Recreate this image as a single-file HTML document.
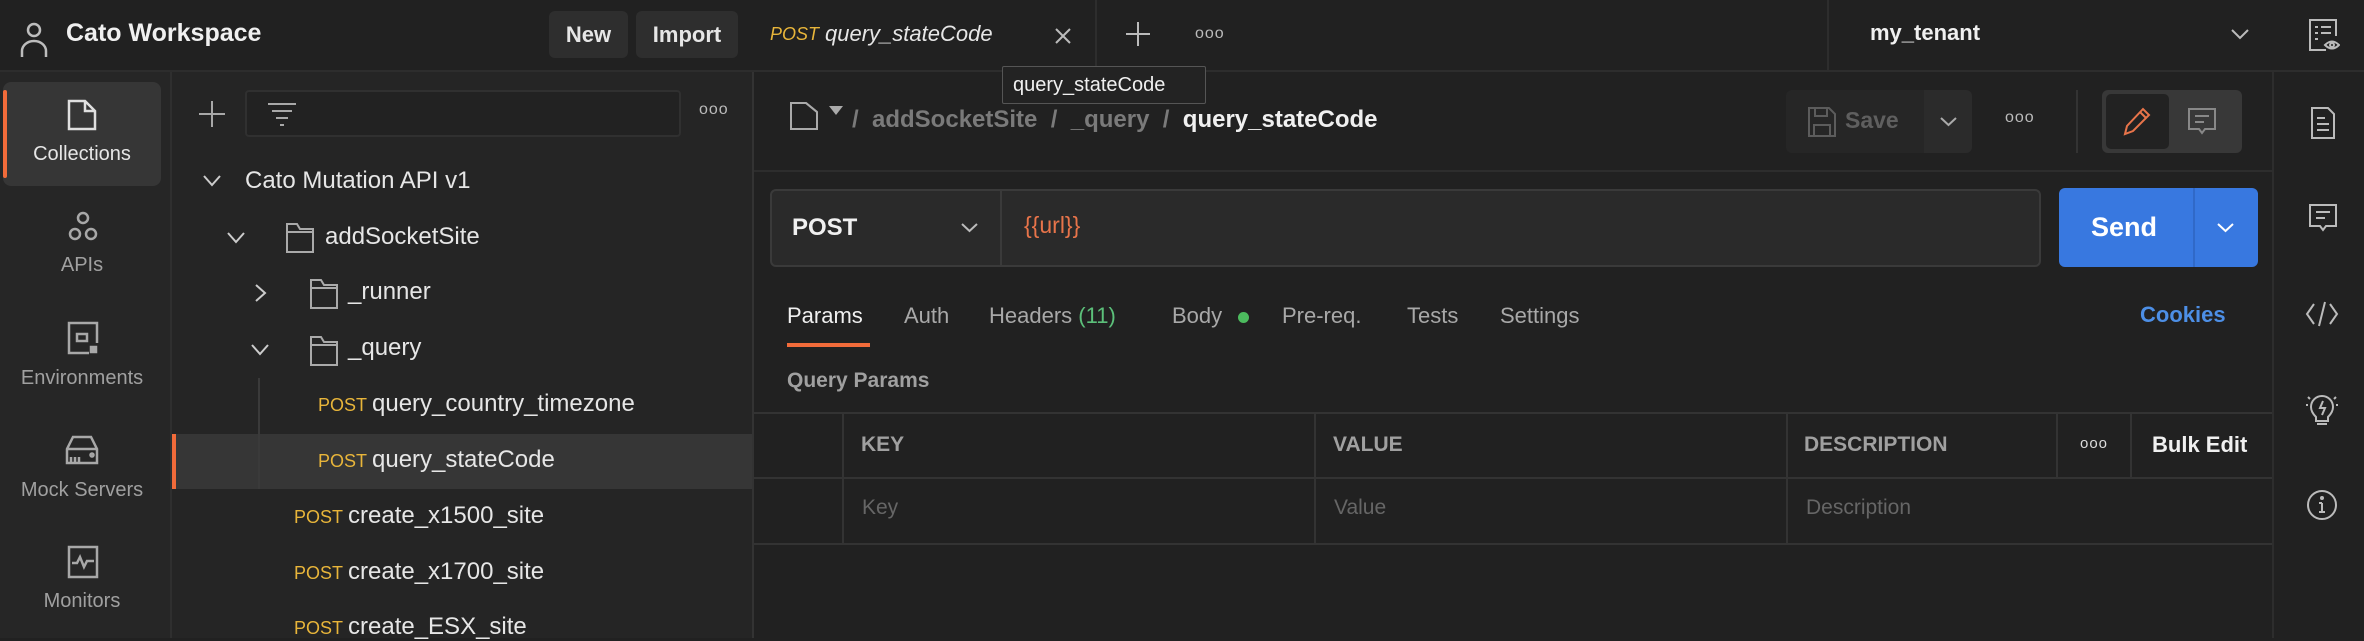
<!DOCTYPE html>
<html><head><meta charset="utf-8"><style>
*{margin:0;padding:0;box-sizing:border-box}
body{width:2364px;height:638px;background:#212121;font-family:"Liberation Sans",sans-serif;color:#e6e6e6;position:relative;overflow:hidden}
.a{position:absolute;white-space:nowrap}
.ic{position:absolute;fill:none;stroke:#bdbdbd;stroke-width:2.5}
.hl{position:absolute;height:2px;background:#333}
.vl{position:absolute;width:2px;background:#333}
.post{color:#e8b53a;font-size:18px}
.row{font-size:24px;color:#e6e6e6}
</style></head><body>
<div class="a" style="left:0;top:0;width:2364px;height:71px;background:#212121"></div>
<div class="hl" style="left:0;top:70px;width:2364px;background:#2d2d2d"></div>
<svg class="ic" style="left:18px;top:20px" width="32" height="40" viewBox="0 0 32 40"><circle cx="16" cy="10" r="6"/><path d="M4 37v-6a12 10 0 0 1 24 0v6"/></svg>
<div class="a" style="left:66px;top:19px;font-size:25px;font-weight:bold;color:#f0f0f0">Cato Workspace</div>
<div class="a" style="left:549px;top:11px;width:79px;height:47px;background:#2e2e2e;border-radius:6px;font-size:22px;font-weight:bold;text-align:center;line-height:47px">New</div>
<div class="a" style="left:636px;top:11px;width:102px;height:47px;background:#2e2e2e;border-radius:6px;font-size:22px;font-weight:bold;text-align:center;line-height:47px">Import</div>
<div class="a" style="left:0;top:72px;width:170px;height:566px;background:#262626"></div>
<div class="vl" style="left:170px;top:72px;height:566px;background:#2f2f2f"></div>
<div class="a" style="left:3px;top:82px;width:158px;height:104px;background:#363636;border-radius:8px"></div>
<div class="a" style="left:3px;top:90px;width:4px;height:88px;background:#f26b3a;border-radius:2px"></div>
<svg class="ic" style="left:67px;top:99px;stroke:#e0e0e0" width="30" height="32" viewBox="0 0 30 32"><path d="M2 2h16l10 10v18H2z M18 2v10h10"/></svg>
<div class="a" style="left:0;top:143px;width:164px;text-align:center;font-size:20px;color:#e6e6e6" >Collections</div>
<svg class="ic" style="left:67px;top:210px;stroke:#a8a8a8" width="32" height="34" viewBox="0 0 32 34"><circle cx="16" cy="8" r="5"/><circle cx="8" cy="24" r="5"/><circle cx="24" cy="24" r="5"/></svg>
<div class="a" style="left:0;top:254px;width:164px;text-align:center;font-size:20px;color:#a0a0a0">APIs</div>
<svg class="ic" style="left:67px;top:321px;stroke:#a8a8a8" width="32" height="34" viewBox="0 0 32 34"><path d="M30 22V2H2v30h20"/><rect x="10" y="13" width="10" height="7"/><rect x="24" y="26" width="5" height="5" fill="#a8a8a8"/></svg>
<div class="a" style="left:0;top:367px;width:164px;text-align:center;font-size:20px;color:#a0a0a0">Environments</div>
<svg class="ic" style="left:65px;top:435px;stroke:#a8a8a8" width="34" height="32" viewBox="0 0 34 32"><path d="M2 14l6-12h18l6 12v14H2z M2 14h30 M6 28v-6 M10 28v-6 M14 28v-6"/><circle cx="27" cy="20" r="1.5"/></svg>
<div class="a" style="left:0;top:479px;width:164px;text-align:center;font-size:20px;color:#a0a0a0">Mock Servers</div>
<svg class="ic" style="left:67px;top:545px;stroke:#a8a8a8" width="32" height="34" viewBox="0 0 32 34"><rect x="2" y="2" width="28" height="30"/><path d="M5 18h5l3-6 4 10 3-6h7"/></svg>
<div class="a" style="left:0;top:590px;width:164px;text-align:center;font-size:20px;color:#a0a0a0">Monitors</div>
<div class="a" style="left:172px;top:72px;width:580px;height:566px;background:#252525"></div>
<div class="vl" style="left:752px;top:72px;height:566px;background:#333"></div>
<svg class="ic" style="left:199px;top:101px;stroke:#a8a8a8;stroke-width:2" width="26" height="26" viewBox="0 0 26 26"><path d="M13 0v26M0 13h26"/></svg>
<div class="a" style="left:245px;top:90px;width:436px;height:47px;border:2px solid #303030;border-radius:4px;background:#222"></div>
<svg class="ic" style="left:267px;top:102px;stroke:#a8a8a8;stroke-width:2" width="30" height="24" viewBox="0 0 30 24"><path d="M1 2h28M5 9h20M9 16h12M13 23h4"/></svg>
<div class="a" style="left:699px;top:101px;font-size:16px;color:#bbb;letter-spacing:1px">ooo</div>
<svg class="ic" style="left:203px;top:175px;stroke:#ccc;stroke-width:2" width="18" height="12" viewBox="0 0 18 12"><path d="M1 1l8 9 8-9"/></svg>
<div class="a row" style="left:245px;top:167px">Cato Mutation API v1</div>
<svg class="ic" style="left:227px;top:232px;stroke:#ccc;stroke-width:2" width="18" height="12" viewBox="0 0 18 12"><path d="M1 1l8 9 8-9"/></svg>
<svg class="ic" style="left:286px;top:223px;stroke:#aaa;stroke-width:2" width="28" height="30" viewBox="0 0 28 30"><path d="M1 1h10l3 5h13v23H1z M1 9h26"/></svg>
<div class="a row" style="left:325px;top:223px">addSocketSite</div>
<svg class="ic" style="left:255px;top:284px;stroke:#ccc;stroke-width:2" width="12" height="18" viewBox="0 0 12 18"><path d="M1 1l9 8-9 8"/></svg>
<svg class="ic" style="left:310px;top:279px;stroke:#aaa;stroke-width:2" width="28" height="30" viewBox="0 0 28 30"><path d="M1 1h10l3 5h13v23H1z M1 9h26"/></svg>
<div class="a row" style="left:348px;top:278px">_runner</div>
<svg class="ic" style="left:251px;top:344px;stroke:#ccc;stroke-width:2" width="18" height="12" viewBox="0 0 18 12"><path d="M1 1l8 9 8-9"/></svg>
<svg class="ic" style="left:310px;top:336px;stroke:#aaa;stroke-width:2" width="28" height="30" viewBox="0 0 28 30"><path d="M1 1h10l3 5h13v23H1z M1 9h26"/></svg>
<div class="a row" style="left:348px;top:334px">_query</div>
<div class="a" style="left:172px;top:434px;width:580px;height:55px;background:#363636"></div>
<div class="a" style="left:172px;top:434px;width:4px;height:55px;background:#f26b3a"></div>
<div class="vl" style="left:258px;top:378px;height:111px;background:#3a3a3a"></div>
<div class="a post" style="left:318px;top:395px">POST</div>
<div class="a row" style="left:372px;top:390px">query_country_timezone</div>
<div class="a post" style="left:318px;top:451px">POST</div>
<div class="a row" style="left:372px;top:446px">query_stateCode</div>
<div class="a post" style="left:294px;top:507px">POST</div>
<div class="a row" style="left:348px;top:502px">create_x1500_site</div>
<div class="a post" style="left:294px;top:563px">POST</div>
<div class="a row" style="left:348px;top:558px">create_x1700_site</div>
<div class="a post" style="left:294px;top:618px">POST</div>
<div class="a row" style="left:348px;top:613px">create_ESX_site</div>
<div class="a" style="left:770px;top:24px;font-size:18px;font-style:italic;color:#e8b53a">POST</div>
<div class="a" style="left:825px;top:21px;font-size:22px;font-style:italic;color:#e6e6e6">query_stateCode</div>
<svg class="ic" style="left:1055px;top:28px;stroke:#bbb;stroke-width:2" width="16" height="16" viewBox="0 0 16 16"><path d="M1 1l14 14M15 1L1 15"/></svg>
<div class="vl" style="left:1095px;top:0;height:70px;background:#2d2d2d"></div>
<svg class="ic" style="left:1126px;top:22px;stroke:#bbb;stroke-width:2" width="24" height="24" viewBox="0 0 24 24"><path d="M12 0v24M0 12h24"/></svg>
<div class="a" style="left:1195px;top:25px;font-size:16px;color:#bbb;letter-spacing:1px">ooo</div>
<div class="vl" style="left:1827px;top:0;height:70px;background:#2d2d2d"></div>
<div class="a" style="left:1870px;top:20px;font-size:22px;font-weight:bold;color:#f0f0f0">my_tenant</div>
<svg class="ic" style="left:2231px;top:29px;stroke:#bbb;stroke-width:2" width="18" height="11" viewBox="0 0 18 11"><path d="M1 1l8 8 8-8"/></svg>
<svg class="ic" style="left:2308px;top:18px;stroke:#bbb;stroke-width:2" width="32" height="34" viewBox="0 0 32 34"><path d="M18 32H2V2h26v16 M7 9h3M13 9h10M7 15h3M13 15h10M7 21h3"/><path d="M17 27q7-7 14 0q-7 7-14 0z"/><circle cx="24" cy="27" r="2"/></svg>
<div class="vl" style="left:2272px;top:72px;height:566px;background:#2d2d2d"></div>
<svg class="ic" style="left:2310px;top:106px;stroke:#bbb;stroke-width:2" width="26" height="34" viewBox="0 0 26 34"><path d="M2 2h16l6 6v24H2z M7 12h8M7 18h12M7 24h12"/></svg>
<svg class="ic" style="left:2308px;top:203px;stroke:#bbb;stroke-width:2" width="30" height="30" viewBox="0 0 30 30"><path d="M2 2h26v21H18l-3 4-3-4H2z M8 9h14M8 15h9"/></svg>
<svg class="ic" style="left:2305px;top:301px;stroke:#bbb;stroke-width:2" width="34" height="26" viewBox="0 0 34 26"><path d="M9 3L2 13l7 10M25 3l7 10-7 10M20 1L14 25"/></svg>
<svg class="ic" style="left:2304px;top:393px;stroke:#bbb;stroke-width:2" width="36" height="34" viewBox="0 0 36 34"><path d="M12 24q-5-5-5-10a11 11 0 0 1 22 0q0 5-5 10v4H12z M13 31h10 M19 8l-3 7h5l-3 7 M2 12h2M32 12h2M4 4l2 2M32 4l-2 2"/></svg>
<svg class="ic" style="left:2306px;top:489px;stroke:#bbb;stroke-width:2" width="32" height="32" viewBox="0 0 32 32"><circle cx="16" cy="16" r="14"/><path d="M16 14v9M13 23h6M13 14h3"/><circle cx="16" cy="9" r="1" fill="#bbb"/></svg>
<svg class="ic" style="left:790px;top:102px;stroke:#aaa;stroke-width:2" width="29" height="28" viewBox="0 0 29 28"><path d="M1 1h15l11 9v17H1z"/><path d="M16 1l11 9"/></svg>
<div class="a" style="left:829px;top:106px;width:0;height:0;border-left:7px solid transparent;border-right:7px solid transparent;border-top:9px solid #aaa"></div>
<div class="a" style="left:852px;top:106px;font-size:24px;color:#7a7a7a;font-weight:bold">/&nbsp; addSocketSite &nbsp;/&nbsp; _query &nbsp;/&nbsp; <span style="color:#f0f0f0">query_stateCode</span></div>
<div class="a" style="left:1002px;top:66px;width:204px;height:38px;background:#232323;border:1px solid #555;border-radius:2px;font-size:20px;color:#f0f0f0;line-height:36px;padding-left:10px">query_stateCode</div>
<div class="a" style="left:1786px;top:90px;width:186px;height:63px;background:#262626;border-radius:6px"></div>
<div class="a" style="left:1924px;top:90px;width:48px;height:63px;background:#2b2b2b;border-radius:0 6px 6px 0"></div>
<svg class="ic" style="left:1808px;top:107px;stroke:#5c5c5c;stroke-width:2" width="28" height="30" viewBox="0 0 28 30"><path d="M1 1h20l6 6v22H1z M7 1v8h12V1 M6 29V18h16v11"/></svg>
<div class="a" style="left:1845px;top:107px;font-size:23px;color:#5f5f5f;font-weight:bold">Save</div>
<svg class="ic" style="left:1940px;top:117px;stroke:#aaa;stroke-width:2" width="17" height="10" viewBox="0 0 17 10"><path d="M1 1l7.5 7 7.5-7"/></svg>
<div class="a" style="left:2005px;top:109px;font-size:16px;color:#bbb;letter-spacing:1px">ooo</div>
<div class="vl" style="left:2076px;top:90px;height:63px;background:#333"></div>
<div class="a" style="left:2102px;top:90px;width:140px;height:63px;background:#383838;border-radius:6px"></div>
<div class="a" style="left:2106px;top:94px;width:63px;height:55px;background:#222;border-radius:5px"></div>
<svg class="ic" style="left:2123px;top:106px;stroke:#e8744a;stroke-width:2" width="30" height="30" viewBox="0 0 30 30"><path d="M2 28l2-8L20 3l6 6-16 16z M17 6l6 6"/></svg>
<svg class="ic" style="left:2188px;top:108px;stroke:#888;stroke-width:2" width="28" height="28" viewBox="0 0 28 28"><path d="M1 1h26v20H17l-3 4-3-4H1z M7 8h14M7 14h9"/></svg>
<div class="hl" style="left:754px;top:170px;width:1518px;background:#2d2d2d"></div>
<div class="a" style="left:770px;top:189px;width:1271px;height:78px;background:#2a2a2a;border:2px solid #3a3a3a;border-radius:6px"></div>
<div class="vl" style="left:1000px;top:190px;height:76px;background:#3a3a3a"></div>
<div class="a" style="left:792px;top:214px;font-size:24px;font-weight:bold;color:#f0f0f0">POST</div>
<svg class="ic" style="left:961px;top:223px;stroke:#bbb;stroke-width:2" width="17" height="10" viewBox="0 0 17 10"><path d="M1 1l7.5 7 7.5-7"/></svg>
<div class="a" style="left:1024px;top:212px;font-size:23px;color:#e8744a">{{url}}</div>
<div class="a" style="left:2059px;top:188px;width:199px;height:79px;background:#3878e0;border-radius:6px"></div>
<div class="vl" style="left:2193px;top:188px;height:79px;background:#3069c8"></div>
<div class="a" style="left:2091px;top:212px;font-size:27px;font-weight:bold;color:#fff">Send</div>
<svg class="ic" style="left:2217px;top:223px;stroke:#fff;stroke-width:2" width="17" height="10" viewBox="0 0 17 10"><path d="M1 1l7.5 7 7.5-7"/></svg>
<div class="a" style="left:787px;top:303px;font-size:22px;color:#f0f0f0">Params</div>
<div class="a" style="left:787px;top:343px;width:83px;height:4px;background:#f26b3a"></div>
<div class="a" style="left:904px;top:303px;font-size:22px;color:#a8a8a8">Auth</div>
<div class="a" style="left:989px;top:303px;font-size:22px;color:#a8a8a8">Headers <span style="color:#5cc07a">(11)</span></div>
<div class="a" style="left:1172px;top:303px;font-size:22px;color:#a8a8a8">Body</div>
<div class="a" style="left:1238px;top:312px;width:11px;height:11px;border-radius:50%;background:#4cbb5e"></div>
<div class="a" style="left:1282px;top:303px;font-size:22px;color:#a8a8a8">Pre-req.</div>
<div class="a" style="left:1407px;top:303px;font-size:22px;color:#a8a8a8">Tests</div>
<div class="a" style="left:1500px;top:303px;font-size:22px;color:#a8a8a8">Settings</div>
<div class="a" style="left:2140px;top:302px;font-size:22px;font-weight:bold;color:#4d8fe6">Cookies</div>
<div class="a" style="left:787px;top:369px;font-size:21px;font-weight:bold;color:#a0a0a0">Query Params</div>
<div class="hl" style="left:754px;top:412px;width:1518px"></div>
<div class="hl" style="left:754px;top:477px;width:1518px"></div>
<div class="hl" style="left:754px;top:543px;width:1518px"></div>
<div class="vl" style="left:842px;top:413px;height:131px"></div>
<div class="vl" style="left:1314px;top:413px;height:131px"></div>
<div class="vl" style="left:1786px;top:413px;height:131px"></div>
<div class="vl" style="left:2056px;top:413px;height:65px"></div>
<div class="vl" style="left:2130px;top:413px;height:65px"></div>
<div class="a" style="left:861px;top:433px;font-size:21px;font-weight:bold;color:#a0a0a0">KEY</div>
<div class="a" style="left:1333px;top:433px;font-size:21px;font-weight:bold;color:#a0a0a0">VALUE</div>
<div class="a" style="left:1804px;top:433px;font-size:21px;font-weight:bold;color:#a0a0a0">DESCRIPTION</div>
<div class="a" style="left:2080px;top:435px;font-size:15px;color:#ddd;letter-spacing:1px">ooo</div>
<div class="a" style="left:2152px;top:432px;font-size:22px;font-weight:bold;color:#f0f0f0">Bulk Edit</div>
<div class="a" style="left:862px;top:496px;font-size:21px;color:#666">Key</div>
<div class="a" style="left:1334px;top:496px;font-size:21px;color:#666">Value</div>
<div class="a" style="left:1806px;top:496px;font-size:21px;color:#666">Description</div>
</body></html>
